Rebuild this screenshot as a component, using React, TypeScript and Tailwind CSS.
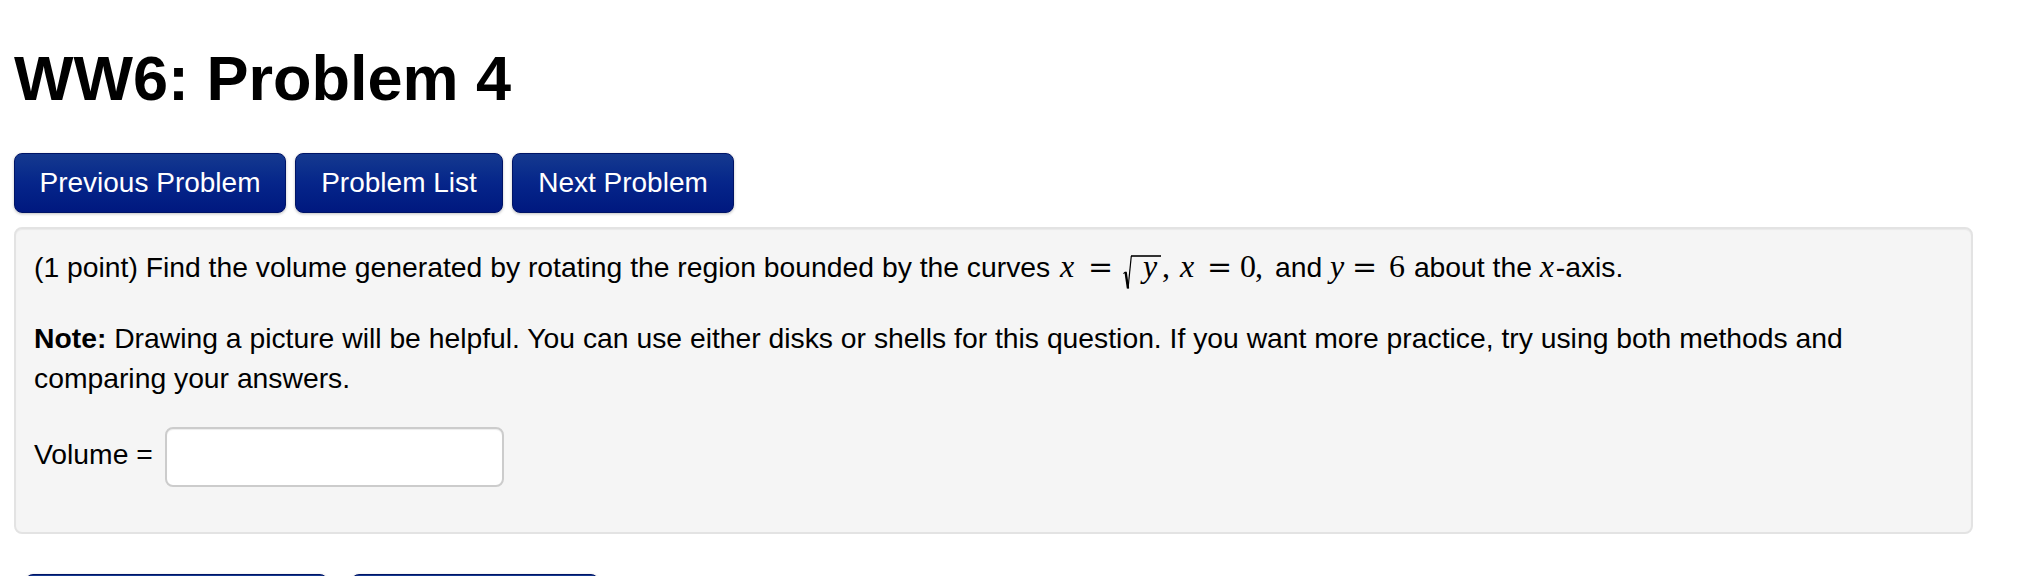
import type { ReactNode } from 'react';

// ============================================================
// WeBWorK problem page — header, nav buttons, problem well
// ============================================================

const sans = { fontFamily: '"Liberation Sans", Arial, Helvetica, sans-serif' };
const serif = '"Liberation Serif", "Times New Roman", serif';

function NavButton({ label, width }: { label?: string; width: string }) {
  return (
    <button
      aria-label={label}
      className={`${width} h-[60px] box-border flex items-center justify-center rounded-[8px] border border-[#001466] bg-gradient-to-b from-[#15398f] via-[#06258a] to-[#00187f] text-white text-[28px] leading-[40px] shadow-[0_1px_3px_rgba(0,0,0,0.25)] cursor-pointer`}
    >
      {label}
    </button>
  );
}

// one math atom, laid out at TeX-like spacing
function Atom({
  children,
  width,
  pad,
  italic = true,
}: {
  children: ReactNode;
  width: string;
  pad: string;
  italic?: boolean;
}) {
  return (
    <span
      className={`inline-block ${width} ${pad} text-[32px] leading-none whitespace-nowrap ${italic ? 'italic' : ''}`}
      style={{ fontFamily: serif }}
    >
      {children}
    </span>
  );
}

function Eq({ width }: { width: string }) {
  return (
    <span
      className={`inline-block ${width} pl-[1px] text-[30px] leading-none`}
      style={{ fontFamily: '"DejaVu Serif", "Liberation Serif", serif' }}
    >
      =
    </span>
  );
}

function SqrtY() {
  return (
    <span className="relative inline-block w-[38px] pl-[20px] text-[32px] leading-none italic" style={{ fontFamily: serif }}>
      <svg className="absolute left-0 top-[5px]" width="38" height="35" viewBox="0 0 38 35" fill="none" stroke="#000">
        <line x1="0.4" y1="18.6" x2="2.6" y2="16.9" strokeWidth="1.1" />
        <line x1="2.6" y1="16.9" x2="5" y2="33.4" strokeWidth="2.4" />
        <line x1="5" y1="33.6" x2="8.3" y2="1" strokeWidth="1.2" />
        <line x1="8" y1="1" x2="38" y2="1" strokeWidth="1.6" />
      </svg>
      y
    </span>
  );
}

export default function App() {
  return (
    <div className="min-h-screen bg-white text-black" style={sans}>
      <h1 className="ml-[14px] pt-[38px] text-[63px] leading-[80px] font-bold">WW6: Problem 4</h1>

      <div className="ml-[14px] mt-[35px] flex gap-[9px]">
        <NavButton label="Previous Problem" width="w-[272px]" />
        <NavButton label="Problem List" width="w-[208px]" />
        <NavButton label="Next Problem" width="w-[222px]" />
      </div>

      <div className="ml-[14px] mt-[14px] w-[1959px] h-[307px] box-border rounded-[8px] border-2 border-[#e3e3e3] bg-[#f5f5f5] px-[18px] pt-[18px] shadow-[inset_0_1px_1px_rgba(0,0,0,0.05)] text-[28.3px] leading-[40px]">
        <div className="h-[40px] whitespace-nowrap">
          (1 point) Find the volume generated by rotating the region bounded by the curves{' '}
          <Atom width="w-[29px]" pad="pl-[2px]">x</Atom>
          <Eq width="w-[36px]" />
          <SqrtY />
          <Atom width="w-[15px]" pad="pl-[1px]" italic={false}>,</Atom>
          <Atom width="w-[30px]" pad="pl-[4px]">x</Atom>
          <Eq width="w-[33px]" />
          <Atom width="w-[16px]" pad="pl-[1px]" italic={false}>0</Atom>
          <Atom width="w-[12px]" pad="pl-0" italic={false}>,</Atom> and{' '}
          <Atom width="w-[21px]" pad="pl-0">y</Atom>
          <Eq width="w-[38px]" />
          <Atom width="w-[17px]" pad="pl-0" italic={false}>6</Atom> about the{' '}
          <Atom width="w-[16px]" pad="pl-0">x</Atom>-axis.
        </div>

        <p className="mt-[31px]">
          <b>Note:</b> Drawing a picture will be helpful. You can use either disks or shells for this question. If you
          want more practice, try using both methods and comparing your answers.
        </p>

        <div className="mt-[29px] flex items-start">
          <span className="mt-[7px] leading-[40px]">Volume =</span>
          <input
            type="text"
            aria-label="Volume"
            className="ml-[12px] w-[339px] h-[60px] box-border rounded-[8px] border-2 border-[#cccccc] bg-white px-[10px] text-[28px] shadow-[inset_0_1px_1px_rgba(0,0,0,0.075)] outline-none"
          />
        </div>
      </div>

      <div className="ml-[25px] mt-[40px] flex gap-[23px]">
        <NavButton width="w-[303px]" />
        <NavButton width="w-[248px]" />
      </div>
    </div>
  );
}
